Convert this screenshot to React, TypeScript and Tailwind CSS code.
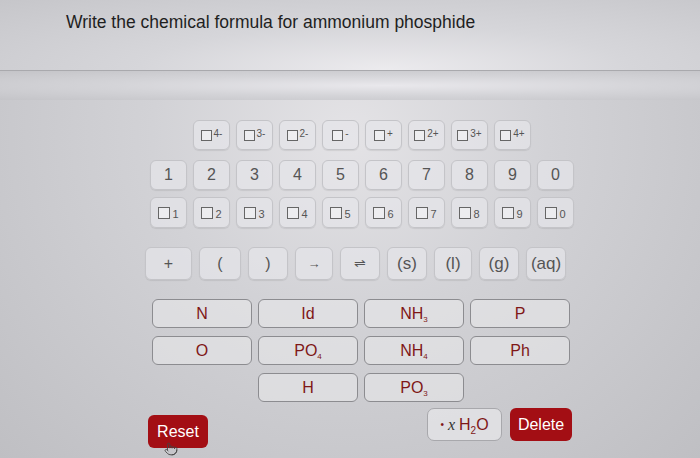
import { Pointer } from "lucide-react";

const charges = ["4-", "3-", "2-", "-", "+", "2+", "3+", "4+"];
const digits = ["1", "2", "3", "4", "5", "6", "7", "8", "9", "0"];
const subs = ["1", "2", "3", "4", "5", "6", "7", "8", "9", "0"];

function Box({ size = "w-[11px] h-[11px]" }: { size?: string }) {
  return <span className={`inline-block ${size} border border-[#666] bg-white/40`} />;
}

const keyCls =
  "flex items-center justify-center rounded-[6px] border border-[#c4c4c8] bg-[#e6e6ea]/70 shadow-[0_1px_1px_rgba(0,0,0,0.08)] text-[#555]";

function Elem({ base, sub }: { base: string; sub?: string }) {
  return (
    <button className="h-[29px] w-[100px] rounded-[6px] border-[1.5px] border-[#8c8c90] bg-[#e8e8ea]/60 text-[16px] text-[#7f1717] flex items-center justify-center">
      <span>{base}</span>
      {sub && <span className="text-[8px] self-end mb-[1px]">{sub}</span>}
    </button>
  );
}

export default function App() {
  return (
    <div
      className="relative w-[700px] h-[458px] overflow-hidden bg-[#c9c9cd]"
      style={{ fontFamily: '"Liberation Sans", Arial, sans-serif' }}
    >
      <div className="h-[71px] border-b border-[#a9a9ad] bg-[radial-gradient(ellipse_at_55%_100%,#ecebee_0%,#d6d6da_45%,#c6c6ca_100%)] pl-[66px] pt-[9px] text-[17.5px] text-[#1f1f1f]">
        Write the chemical formula for ammonium phosphide
      </div>
      <div className="h-[29px] bg-[radial-gradient(ellipse_at_55%_50%,#e9e8ec_0%,#d4d4d8_50%,#c4c4c8_100%)]" />

      <div className="h-[358px] bg-[radial-gradient(ellipse_at_50%_10%,#e4e3e6_0%,#d2d2d6_40%,#bfbfc3_100%)] pt-[20px]">
        {/* charges */}
        <div className="flex gap-[6px] pl-[193px]">
          {charges.map((c) => (
            <div key={c} className={`${keyCls} w-[37px] h-[30px] gap-[2px]`}>
              <Box />
              <span className="text-[10px] self-start mt-[5px]">{c}</span>
            </div>
          ))}
        </div>

        {/* digits */}
        <div className="flex gap-[6px] pl-[150px] mt-[10px]">
          {digits.map((d) => (
            <div key={d} className={`${keyCls} w-[37px] h-[30px] text-[16px]`}>
              {d}
            </div>
          ))}
        </div>

        {/* subscripts */}
        <div className="flex gap-[6px] pl-[150px] mt-[7px]">
          {subs.map((s) => (
            <div key={s} className={`${keyCls} w-[37px] h-[31px] gap-[2px]`}>
              <Box size="w-[12px] h-[12px]" />
              <span className="text-[11px] self-end mb-[5px]">{s}</span>
            </div>
          ))}
        </div>

        {/* symbols */}
        <div className="flex gap-[7px] pl-[145px] mt-[19px] text-[16px]">
          <div className={`${keyCls} w-[47px] h-[33px]`}>+</div>
          <div className={`${keyCls} w-[42px] h-[33px] border-[#8c8c90] text-[#8b1a1a]`}>(</div>
          <div className={`${keyCls} w-[40px] h-[33px] border-[#8c8c90] text-[#8b1a1a]`}>)</div>
          <div className={`${keyCls} w-[38px] h-[33px] text-[13px]`}>→</div>
          <div className={`${keyCls} w-[40px] h-[33px] text-[14px]`}>⇌</div>
          <div className={`${keyCls} w-[40px] h-[33px] text-[17px]`}>(s)</div>
          <div className={`${keyCls} w-[38px] h-[33px] text-[17px]`}>(l)</div>
          <div className={`${keyCls} w-[40px] h-[33px] text-[17px]`}>(g)</div>
          <div className={`${keyCls} w-[40px] h-[33px] text-[17px]`}>(aq)</div>
        </div>

        {/* elements */}
        <div className="grid grid-cols-[repeat(4,100px)] gap-x-[6px] gap-y-[8px] pl-[152px] mt-[19px]">
          <Elem base="N" />
          <Elem base="Id" />
          <Elem base="NH" sub="3" />
          <Elem base="P" />
          <Elem base="O" />
          <Elem base="PO" sub="4" />
          <Elem base="NH" sub="4" />
          <Elem base="Ph" />
          <div />
          <Elem base="H" />
          <Elem base="PO" sub="3" />
        </div>

        {/* bottom bar */}
        <div className="flex items-start pl-[148px] mt-[6px]">
          <div className="relative mt-[7px]">
            <button className="w-[60px] h-[33px] rounded-[6px] bg-[#a30e14] text-white text-[16px]">
              Reset
            </button>
            <Pointer className="absolute left-[16px] top-[27px] w-[14px] h-[14px] text-[#444]" strokeWidth={1.5} />
          </div>
          <button className="ml-[219px] w-[75px] h-[33px] rounded-[7px] border border-[#a8a8ac] bg-[#e8e8eb]/70 flex items-center justify-center gap-[4px] text-[16px] text-[#7f1717]">
            <span className="text-[10px]">•</span>
            <span className="italic text-[#333]" style={{ fontFamily: '"Liberation Serif", serif' }}>x</span>
            <span>
              H<span className="text-[10px] relative top-[4px]">2</span>O
            </span>
          </button>
          <button className="ml-[8px] w-[62px] h-[33px] rounded-[6px] bg-[#a30e14] text-white text-[16px]">
            Delete
          </button>
        </div>
      </div>
    </div>
  );
}
